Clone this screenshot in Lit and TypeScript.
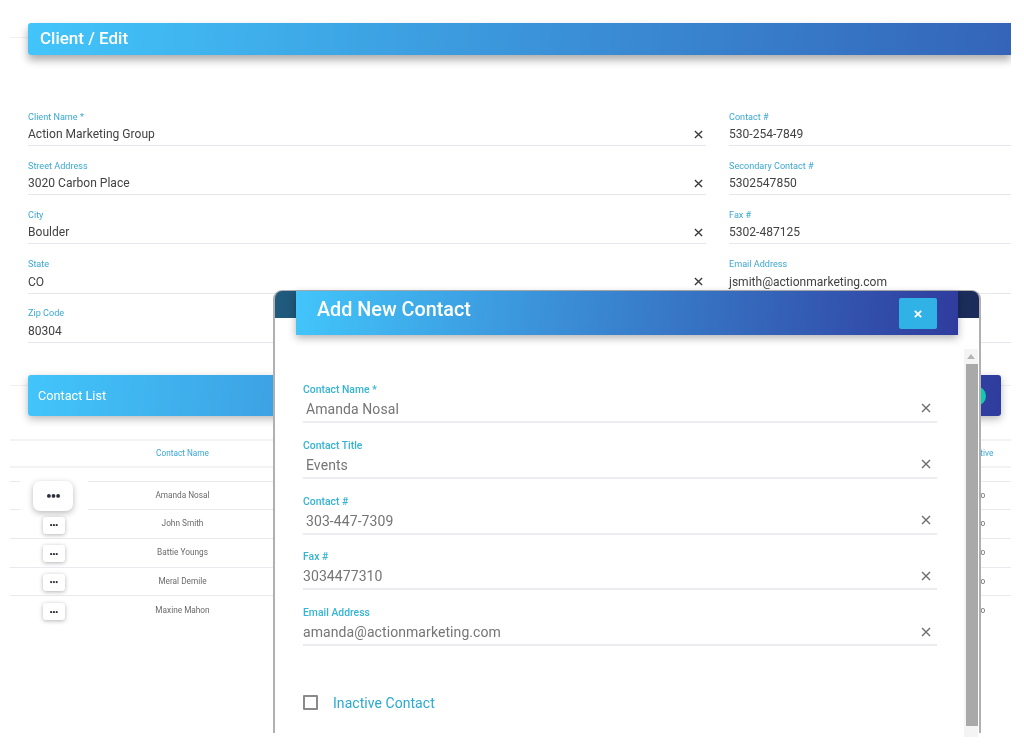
import { LitElement, html, css, svg } from "lit";
import { customElement } from "lit/decorators.js";

const cross = (size: number, stroke: string, w: number) => html`<svg class="x" width=${size} height=${size} viewBox="0 0 10 10" aria-hidden="true">
  ${svg`<path d="M1 1 L9 9 M9 1 L1 9" fill="none" stroke=${stroke} stroke-width=${w}/>`}
</svg>`;

const dots = (r: number, gap: number) => html`<svg width=${gap * 2 + r * 2} height=${r * 2} aria-hidden="true">
  ${[0, 1, 2].map((i) => svg`<circle cx=${r + i * gap} cy=${r} r=${r} fill="#2b2f3a"/>`)}
</svg>`;

const leftFields = [
  ["Client Name *", "Action Marketing Group"],
  ["Street Address", "3020 Carbon Place"],
  ["City", "Boulder"],
  ["State", "CO"],
  ["Zip Code", "80304"],
];
const rightFields = [
  ["Contact #", "530-254-7849"],
  ["Secondary Contact #", "5302547850"],
  ["Fax #", "5302-487125"],
  ["Email Address", "jsmith@actionmarketing.com"],
  ["", ""],
];
const contacts = ["Amanda Nosal", "John Smith", "Battie Youngs", "Meral Demile", "Maxine Mahon"];
const modalFields: [string, string, boolean][] = [
  ["Contact Name *", "Amanda Nosal", true],
  ["Contact Title", "Events", true],
  ["Contact #", "303-447-7309", true],
  ["Fax #", "3034477310", false],
  ["Email Address", "amanda@actionmarketing.com", false],
];

@customElement("app-root")
export class AppRoot extends LitElement {
  static styles = css`
    :host {
      display: block;
      position: relative;
      width: 1024px;
      height: 756px;
      overflow: hidden;
      background: #fff;
      font-family: Roboto, "Liberation Sans", sans-serif;
      filter: blur(0.35px);
    }
    .page {
      width: 1001px;
      height: 756px;
      margin-left: 10px;
      overflow: hidden;
    }
    .section-one {
      margin-top: 37px;
      border-top: 1px solid #f0f0f2;
    }
    .page-bar {
      margin: -15px 0 0 18px;
      height: 32px;
      box-sizing: border-box;
      padding: 0 0 3px 12px;
      display: flex;
      align-items: center;
      border-radius: 3px 0 0 3px;
      background: linear-gradient(95deg, #42c5fb, #3464b8);
      box-shadow: 0 5px 9px rgba(0, 0, 0, 0.33);
      color: #fff;
      font-size: 17px;
      font-weight: 500;
    }
    .form {
      display: grid;
      grid-template-columns: 678px 282px;
      column-gap: 23px;
      margin: 42px 0 0 18px;
    }
    .col {
      display: flex;
      flex-direction: column;
    }
    .field {
      height: 49.15px;
      box-sizing: border-box;
      border-bottom: 1.5px solid #e6e6ec;
      position: relative;
      display: flex;
      flex-direction: column;
      justify-content: flex-end;
    }
    .field label {
      font-size: 9.1px;
      line-height: 12px;
      color: #3ba8d2;
      padding-bottom: 0.5px;
    }
    .field .value {
      font-size: 12.05px;
      line-height: 16px;
      color: #424242;
      padding: 3px 0 3px;
    }
    .field .x {
      position: absolute;
      right: 3.5px;
      bottom: 6.5px;
    }
    .section-two {
      margin-top: 42.5px;
      border-top: 1px solid #f0f0f2;
    }
    .list-bar {
      margin: -11px 0 0 18px;
      width: 973px;
      height: 41px;
      box-sizing: border-box;
      padding: 0 15px 0 10px;
      display: flex;
      align-items: center;
      justify-content: space-between;
      border-radius: 3px;
      background: linear-gradient(95deg, #42c5fb, #2f3c9e);
      box-shadow: 0 3px 8px rgba(0, 0, 0, 0.28);
      color: #fff;
      font-size: 12.7px;
    }
    .add-dot {
      width: 20px;
      height: 20px;
      border-radius: 50%;
      background: #14c9b0;
    }
    .table {
      margin-top: 23px;
      border-top: 2px solid #f3f3f5;
    }
    .row {
      display: grid;
      grid-template-columns: 78px 189px 1fr 58px;
      align-items: center;
      height: 28.75px;
      border-bottom: 1px solid #e9e9ee;
      font-size: 8.25px;
      color: #6a6a6a;
      text-align: center;
      box-sizing: border-box;
    }
    .row > span {
      padding-bottom: 2px;
    }
    .row > span.no {
      padding-right: 4px;
    }
    .row.head {
      height: 27px;
      color: #3aa5d5;
      border-bottom: 2px solid #f3f3f5;
      margin-bottom: 13px;
    }
    .row.first {
      border-top: 1px solid #e9e9ee;
      height: 29px;
    }
    .row.last {
      border-bottom: none;
    }
    .act {
      position: relative;
      height: 100%;
      display: flex;
      align-items: center;
      justify-content: center;
    }
    .more {
      width: 22px;
      height: 17px;
      margin-left: 10px;
      background: #fff;
      border-radius: 3px;
      box-shadow: 0 1px 4px rgba(0, 0, 0, 0.3);
      display: flex;
      align-items: center;
      justify-content: center;
      transform: translateY(1px);
    }
    .hover-zone {
      position: absolute;
      left: 10px;
      right: 0;
      top: -1px;
      bottom: -1px;
      background: #fff;
      display: flex;
      align-items: center;
      justify-content: center;
    }
    .more.big {
      width: 40px;
      height: 30px;
      margin: 0 0 0 -2px;
      border-radius: 7px;
      box-shadow: 0 2px 6px rgba(0, 0, 0, 0.28);
      transform: none;
    }
    .modal {
      position: absolute;
      left: 273px;
      top: 290px;
      width: 708px;
      height: 443px;
      box-sizing: border-box;
      border: solid #b0b0b2;
      border-width: 1px 2px 0 2px;
      border-radius: 9px 9px 0 0;
      background: linear-gradient(90deg, #205a7c, #1b2c5a) top / 100% 27px no-repeat #fff;
    }
    .modal-bar {
      margin: 0 21px;
      height: 44px;
      box-sizing: border-box;
      padding: 0 21px;
      display: flex;
      justify-content: space-between;
      background: linear-gradient(95deg, #42c5fb, #2f3c9e);
      box-shadow: 0 3px 8px rgba(0, 0, 0, 0.3);
      color: #fff;
      font-size: 19.8px;
      font-weight: 500;
      line-height: 37px;
    }
    .close {
      margin-top: 7px;
      width: 38px;
      height: 31px;
      border-radius: 2px;
      background: #30b2e6;
      display: flex;
      align-items: center;
      justify-content: center;
    }
    .modal-form {
      margin: 32px 42px 0 28px;
      display: flex;
      flex-direction: column;
    }
    .m-field {
      height: 55.85px;
      box-sizing: border-box;
      border-bottom: 2px solid #ebebf0;
      position: relative;
      display: flex;
      flex-direction: column;
      justify-content: flex-end;
    }
    .m-field label {
      font-size: 10.4px;
      font-weight: 500;
      line-height: 13px;
      color: #35b4d4;
    }
    .m-field .value {
      font-size: 14px;
      line-height: 18px;
      color: #757575;
      letter-spacing: 0.08px;
      padding: 4px 0 3px;
    }
    .m-field .value.inset {
      padding-left: 3px;
    }
    .m-field .x {
      position: absolute;
      right: 6.5px;
      bottom: 7.5px;
    }
    .check {
      display: flex;
      align-items: center;
      gap: 15px;
      margin-top: 48.7px;
      color: #2aa9d2;
      font-size: 14px;
      letter-spacing: 0.05px;
    }
    .box {
      width: 15px;
      height: 15px;
      box-sizing: border-box;
      border: 2px solid #8a8a8a;
      border-radius: 1px;
    }
    .scroll {
      position: absolute;
      left: 689px;
      top: 58px;
      width: 14px;
      height: 388px;
      background: #f4f4f4;
      display: flex;
      flex-direction: column;
      align-items: flex-end;
    }
    .arrow {
      width: 14px;
      height: 15px;
      display: flex;
      align-items: center;
      justify-content: center;
    }
    .thumb {
      width: 12px;
      height: 362px;
      background: #a9a9a9;
    }
  `;

  render() {
    return html`
      <div class="page">
        <section class="section-one">
          <div class="page-bar">Client / Edit</div>
          <div class="form">
            <div class="col">
              ${leftFields.map(([l, v], i) => html`<div class="field">
                <label>${l}</label><span class="value">${v}</span>
                ${i < 4 ? cross(9, "#3a3a3a", 1.5) : ""}
              </div>`)}
            </div>
            <div class="col">
              ${rightFields.map(([l, v]) => html`<div class="field">
                <label>${l}</label><span class="value">${v}</span>
              </div>`)}
            </div>
          </div>
        </section>
        <section class="section-two">
          <div class="list-bar"><span>Contact List</span><span class="add-dot"></span></div>
          <div class="table">
            <div class="row head"><span></span><span>Contact Name</span><span></span><span>Active</span></div>
            ${contacts.map((c, i) => html`<div class="row ${i === 0 ? "first" : ""} ${i === contacts.length - 1 ? "last" : ""}">
              <div class="act">
                ${i === 0
                  ? html`<div class="hover-zone"><div class="more big">${dots(1.9, 4.6)}</div></div>`
                  : html`<div class="more">${dots(1.1, 2.8)}</div>`}
              </div>
              <span>${c}</span><span></span><span class="no">No</span>
            </div>`)}
          </div>
        </section>
      </div>
      <div class="modal">
        <div class="modal-bar">
          <span>Add New Contact</span>
          <div class="close">${cross(8, "#fff", 2.2)}</div>
        </div>
        <div class="modal-form">
          ${modalFields.map(([l, v, inset]) => html`<div class="m-field">
            <label>${l}</label>
            <span class="value ${inset ? "inset" : ""}">${v}</span>
            ${cross(10, "#6e6e6e", 1.4)}
          </div>`)}
          <div class="check"><span class="box"></span><span>Inactive Contact</span></div>
        </div>
        <div class="scroll">
          <div class="arrow"><svg width="8" height="5" aria-hidden="true"><path d="M0 5 L4 0 L8 5 Z" fill="#b5b5b5"/></svg></div>
          <div class="thumb"></div>
        </div>
      </div>
    `;
  }
}
